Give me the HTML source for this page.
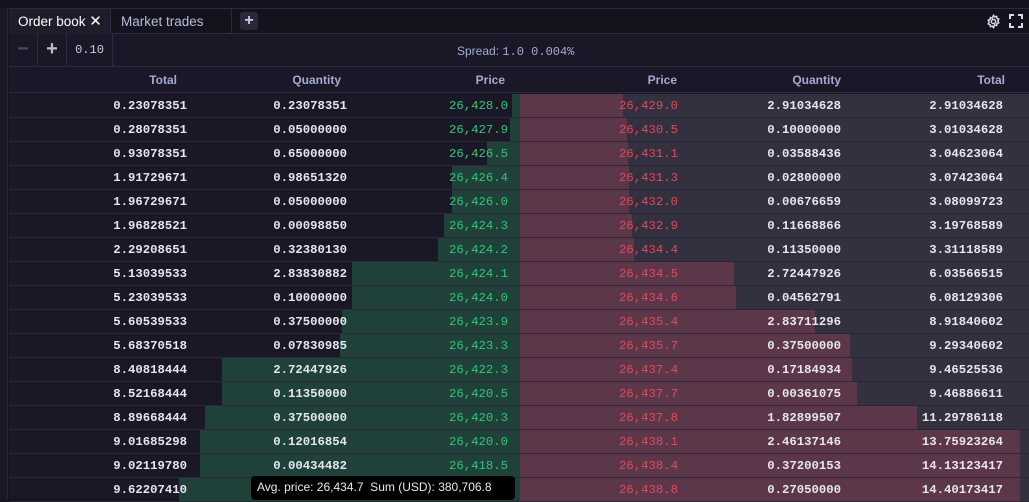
<!DOCTYPE html>
<html><head><style>
*{margin:0;padding:0;box-sizing:border-box}
body{width:1029px;height:499px;background:#15131f;overflow:hidden;position:relative;font-family:"Liberation Sans",sans-serif}
.side{position:absolute;left:0;top:8px;width:8px;height:491px;background:#1a1826;border-right:1px solid #2a2838}
.panel{position:absolute;left:9px;top:8px;width:1020px;height:491px;background:#1a1826;border-top:1px solid #2c2a3c}
.tabs{position:absolute;left:0;top:0;width:1020px;height:25px;background:#14121d;border-bottom:1px solid #2c2a3c}
.tab{position:absolute;top:0;height:25px;font-size:13.5px;line-height:25px;color:#b8bcd8}
.tb{position:absolute;left:0;top:25px;width:1020px;height:33px;border-bottom:1px solid #2c2a3c}
.hdr{position:absolute;left:0;top:59px;width:1020px;height:25px;border-bottom:1px solid #2c2a3c}
.h{position:absolute;top:5px;font-size:12px;font-weight:bold;color:#a4aad4;text-align:right;width:100px}
.row{position:absolute;left:0;width:1020px;height:24px;border-bottom:1px solid #2a2836}
.c{position:absolute;top:5px;font-family:"Liberation Mono",monospace;font-weight:bold;font-size:12.3px;text-align:right;width:140px;color:#e6e6ee}
.g{color:#2fc67a;font-weight:normal}.r{color:#e24a5c;font-weight:normal}
.gb{position:absolute;top:0;height:23px;background:#1f4139}
.ab{position:absolute;top:0;left:511px;width:509px;height:23px;background:#33313f}
.rb{position:absolute;top:0;left:511px;height:23px;background:#5b3749}
</style></head><body>
<div class="side"></div>
<div class="panel">
 <div class="tabs">
  <div style="position:absolute;left:0;top:0;width:101px;height:25px;background:#1f1d2b"></div>
  <div class="tab" style="left:9px;color:#fff">Order book <span style="font-size:15px">✕</span></div>
  <div style="position:absolute;left:101px;top:0;width:1px;height:25px;background:#2c2a3c"></div>
  <div class="tab" style="left:112px">Market trades</div>
  <div style="position:absolute;left:222px;top:0;width:1px;height:25px;background:#2c2a3c"></div>
  <div style="position:absolute;left:231px;top:3px;width:18px;height:18px;background:#2a2838;border-radius:3px;color:#c8cce0;text-align:center;line-height:17px;font-size:16px;font-weight:bold">+</div>
  <svg style="position:absolute;left:977px;top:5px" width="15" height="15" viewBox="0 0 16 16" fill="none" stroke="#d8dae8" stroke-width="1.6"><circle cx="8" cy="8" r="2.3"/><path d="M8 1.5l1.3 1.6 2-.5.4 2 1.9.9-.9 1.9.9 1.9-1.9.9-.4 2-2-.5L8 14.5l-1.3-1.6-2 .5-.4-2-1.9-.9.9-1.9-.9-1.9 1.9-.9.4-2 2 .5z"/></svg>
  <svg style="position:absolute;left:1000px;top:5px" width="14" height="14" viewBox="0 0 14 14" fill="none" stroke="#d8dae8" stroke-width="2"><path d="M1 5V1h4M9 1h4v4M13 9v4H9M5 13H1V9"/></svg>
 </div>
 <div class="tb">
  <div style="position:absolute;left:0;top:0;width:29px;height:32px;border-right:1px solid #2c2a3c;color:#4c4a5c;text-align:center;line-height:31px;font-size:20px;font-weight:bold">−</div>
  <div style="position:absolute;left:29px;top:0;width:29px;height:32px;border-right:1px solid #2c2a3c;color:#b8bcd0;text-align:center;line-height:31px;font-size:20px;font-weight:bold">+</div>
  <div style="position:absolute;left:58px;top:0;width:46px;height:32px;border-right:1px solid #2c2a3c;color:#c8cce0;text-align:center;line-height:32px;font-family:'Liberation Mono',monospace;font-size:12px">0.10</div>
  <div style="position:absolute;left:448px;top:10px;font-size:12px;color:#a4aad4">Spread: <span style="font-family:'Liberation Mono',monospace">1.0 0.004%</span></div>
 </div>
 <div class="hdr">
  <div class="h" style="left:68px">Total</div>
  <div class="h" style="left:232px">Quantity</div>
  <div class="h" style="left:396px">Price</div>
  <div class="h" style="left:568px">Price</div>
  <div class="h" style="left:732px">Quantity</div>
  <div class="h" style="left:896px">Total</div>
 </div>
 <div id="rows"></div>
 <div style="position:absolute;left:242px;top:467px;width:264px;height:24px;background:#000;border-radius:4px;color:#e8e8ee;font-size:12px;line-height:22px;padding-left:6px">Avg. price: 26,434.7&nbsp; Sum (USD): 380,706.8</div>
</div>
<script>
var d=[["0.23078351","0.23078351","26,428.0","26,429.0","2.91034628","2.91034628",503,614],
["0.28078351","0.05000000","26,427.9","26,430.5","0.10000000","3.01034628",501,618],
["0.93078351","0.65000000","26,426.5","26,431.1","0.03588436","3.04623064",478,619],
["1.91729671","0.98651320","26,426.4","26,431.3","0.02800000","3.07423064",443,620],
["1.96729671","0.05000000","26,426.0","26,432.0","0.00676659","3.08099723",443,620],
["1.96828521","0.00098850","26,424.3","26,432.9","0.11668866","3.19768589",435,623],
["2.29208651","0.32380130","26,424.2","26,434.4","0.11350000","3.31118589",429,625],
["5.13039533","2.83830882","26,424.1","26,434.5","2.72447926","6.03566515",343,725],
["5.23039533","0.10000000","26,424.0","26,434.6","0.04562791","6.08129306",343,727],
["5.60539533","0.37500000","26,423.9","26,435.4","2.83711296","8.91840602",333,806],
["5.68370518","0.07830985","26,423.3","26,435.7","0.37500000","9.29340602",331,841],
["8.40818444","2.72447926","26,422.3","26,437.4","0.17184934","9.46525536",213,843],
["8.52168444","0.11350000","26,420.5","26,437.7","0.00361075","9.46886611",213,848],
["8.89668444","0.37500000","26,420.3","26,437.8","1.82899507","11.29786118",196,908],
["9.01685298","0.12016854","26,420.0","26,438.1","2.46137146","13.75923264",191,1011],
["9.02119780","0.00434482","26,418.5","26,438.4","0.37200153","14.13123417",191,1011],
["9.62207410","","","26,438.8","0.27050000","14.40173417",170,1011]];
var h="";d.forEach(function(r,i){var t=85+i*24;
h+='<div class="row" style="top:'+t+'px"><div class="gb" style="left:'+r[6]+'px;width:'+(511-r[6])+'px"></div><div class="ab"></div><div class="rb" style="width:'+(r[7]-511)+'px"></div>'+
'<div class="c" style="left:38px">'+r[0]+'</div><div class="c" style="left:198px">'+r[1]+'</div><div class="c g" style="left:359px">'+r[2]+'</div>'+
'<div class="c r" style="left:529px">'+r[3]+'</div><div class="c" style="left:692px">'+r[4]+'</div><div class="c" style="left:854px">'+r[5]+'</div></div>';});
document.getElementById("rows").innerHTML=h;
</script>
</body></html>
